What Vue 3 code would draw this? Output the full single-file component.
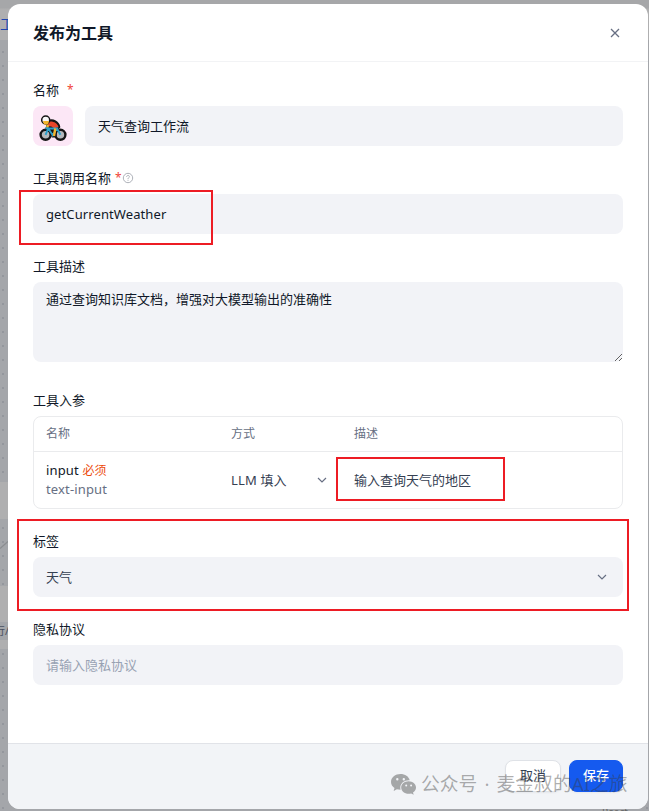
<script setup>
import { ref } from 'vue'

const name = ref('天气查询工作流')
const callName = ref('getCurrentWeather')
const description = ref('通过查询知识库文档，增强对大模型输出的准确性')
const privacy = ref('')

const params = ref([
  { name: 'input', type: 'text-input', required: true, method: 'LLM 填入', desc: '输入查询天气的地区' }
])
</script>

<template>
  <div class="page">
    <div class="canvas">
      <div class="topbar"><span>工</span></div>
      <div class="node node-a"></div>
      <svg class="edge" width="8" height="10" viewBox="0 0 8 10"><path d="M0 8.5 8 1.5" stroke="#8b8d91" stroke-width="1.3" /></svg>
      <div class="node node-b"><span>行/</span></div>
      <span class="attribution">React Flow</span>
    </div>

    <div class="modal">
      <header class="modal-header">
        <h1>发布为工具</h1>
        <svg class="close" width="16" height="16" viewBox="0 0 16 16" fill="none">
          <path d="M4 4l8 8M12 4l-8 8" stroke="#676f83" stroke-width="1.3" />
        </svg>
      </header>

      <main class="modal-body">
        <div class="field">
          <label>名称 <i class="star wide">*</i></label>
          <div class="name-row">
            <div class="app-icon">
              <svg width="28" height="28" viewBox="0 0 28 28" fill="none">
                <circle cx="6.6" cy="20.8" r="5" fill="#b4b8bb" stroke="#151515" stroke-width="2.4" />
                <circle cx="21.4" cy="20.8" r="5" fill="#b4b8bb" stroke="#151515" stroke-width="2.4" />
                <path d="M9.5 7C14 5 19.500 8 20.300 13L17 16.500l-.5 6h-3l-1-6-5-2z" fill="#151515" stroke="#151515" stroke-width="2" stroke-linejoin="round" />
                <path d="M9 8c4-1.600 9.500.8 10.500 5l-4.200 1.400-3-2-3.300-.2z" fill="#e8452a" />
                <path d="M9 11l-1 3" stroke="#f3b52c" stroke-width="2.400" />
                <path d="M6.600 20.800l2.600-6.300h8.600l-4 6.800-4.600-6.800M17.800 14l3.600 6.800M6.500 14.300h3" stroke="#2a9fca" stroke-width="1.900" />
                <path d="M16.300 14.500L15 22" stroke="#f3b52c" stroke-width="2.400" />
                <circle cx="6.700" cy="6" r="4" fill="#f8f8f8" stroke="#151515" stroke-width="1.500" />
                <path d="M4 7h6L9 10.500H5z" fill="#f3b52c" />
              </svg>
            </div>
            <input v-model="name" class="control" type="text">
          </div>
        </div>

        <div class="field">
          <label>工具调用名称 <i class="star">*</i>
            <svg class="help" width="12" height="12" viewBox="0 0 12 12" fill="none" stroke="#adb1b8">
              <circle cx="6" cy="6" r="4.700" />
              <path d="M4.600 4.800c.1-1.900 2.900-1.800 2.800 0C7.300 5.800 6 5.700 6 7M6 7.800v1" />
            </svg>
          </label>
          <input v-model="callName" class="control latin" type="text">
        </div>

        <div class="field field-area">
          <label>工具描述</label>
          <textarea v-model="description" class="control area"></textarea>
        </div>

        <div class="field">
          <label>工具入参</label>
          <div class="table">
            <div class="row head">
              <span>名称</span>
              <span>方式</span>
              <span>描述</span>
            </div>
            <div v-for="p in params" :key="p.name" class="row">
              <div class="param">
                <div><b>{{ p.name }}</b> <em v-if="p.required">必须</em></div>
                <div class="type">{{ p.type }}</div>
              </div>
              <div class="method">
                <span>{{ p.method }}</span>
                <svg width="12" height="12" viewBox="0 0 12 12" fill="none"><path d="M2 4l4 4 4-4" stroke="#676f83" stroke-width="1.200" /></svg>
              </div>
              <div class="desc">{{ p.desc }}</div>
            </div>
          </div>
        </div>

        <div class="field">
          <label>标签</label>
          <div class="control select">
            <span>天气</span>
            <svg width="12" height="12" viewBox="0 0 12 12" fill="none"><path d="M2 4l4 4 4-4" stroke="#676f83" stroke-width="1.200" /></svg>
          </div>
        </div>

        <div class="field">
          <label>隐私协议</label>
          <input v-model="privacy" class="control" type="text" placeholder="请输入隐私协议">
        </div>
      </main>

      <footer class="modal-footer">
        <button class="btn">取消</button>
        <button class="btn primary">保存</button>
      </footer>
    </div>

    <div class="mark mark-call"></div>
    <div class="mark mark-desc"></div>
    <div class="mark mark-tag"></div>

    <div class="watermark">
      <svg width="26" height="22" viewBox="0 0 26 22">
        <path fill-rule="evenodd" d="M9.500 1C4.300 1 0 4.500 0 8.900c0 2.500 1.400 4.600 3.500 6.100L2.600 18l3.300-1.800c1.100.3 2.300.5 3.700.5A7 7 0 0 1 9.300 14.500c0-4.200 3.900-7.300 8.500-7.300h.9C17.800 3.500 14 1 9.500 1zM6.300 5a1.200 1.200 0 1 1 0 2.400 1.200 1.200 0 0 1 0-2.400zm6.500 0a1.200 1.200 0 1 1 0 2.400 1.200 1.200 0 0 1 0-2.400z" />
        <path fill-rule="evenodd" d="M17.600 8.200c-4.200 0-7.400 2.800-7.400 6.300s3.200 6.300 7.400 6.300c.9 0 1.800-.2 2.600-.4l2.500 1.400-.7-2.300c1.900-1.300 3-3 3-5 0-3.500-3.400-6.300-7.400-6.300zM15.200 11.500a1 1 0 1 1 0 2 1 1 0 0 1 0-2zm4.900 0a1 1 0 1 1 0 2 1 1 0 0 1 0-2z" />
      </svg>
      <span>公众号 · 麦金叔的AI之旅</span>
    </div>
  </div>
</template>

<style>
body
{
    margin: 0;
    overflow: hidden;
}
</style>

<style scoped>
.page
{
    position: relative;
    box-sizing: border-box;
    width: 649px;
    height: 811px;
    padding: 4px 1px 2px 8px;
    overflow: hidden;
    background: #a4a6aa;
    font-family: "Noto Sans", "Noto Sans CJK SC", sans-serif;
    font-size: 13px;
    line-height: 20px;
    color: #101828;
}

/* dimmed workflow canvas behind the dialog */
.canvas
{
    position: absolute;
    inset: 0;
    background-image: radial-gradient(circle, #94979d 0.8px, transparent 1px);
    background-size: 14px 14px;
    background-position: -4px 3px;
}

.topbar
{
    position: absolute;
    top: 0;
    left: 0;
    width: 649px;
    height: 40px;
    background: linear-gradient(#a6a7a9 8px, #afafb0 9px);
}

.topbar span
{
    position: absolute;
    top: 14px;
    left: 0;
    font-size: 14px;
    color: #1f46b0;
}

.node
{
    position: absolute;
    left: 0;
    width: 10px;
    background: #afafb0;
}

.node-a
{
    top: 482px;
    height: 37px;
}

.node-b
{
    top: 586px;
    height: 63px;
}

.node-b span
{
    position: absolute;
    top: 36px;
    left: -6px;
    font-size: 11px;
    line-height: 18px;
    white-space: nowrap;
    color: #4b5261;
    background: #a4a6aa;
}

.edge
{
    position: absolute;
    top: 540px;
    left: 0;
}

.attribution
{
    position: absolute;
    top: 806px;
    left: 602px;
    font-size: 10px;
    line-height: 12px;
    color: #666;
}

.modal
{
    position: relative;
    display: flex;
    flex-direction: column;
    width: 640px;
    height: 805px;
    border-radius: 12px;
    overflow: hidden;
    background: #fff;
}

.modal-header
{
    box-sizing: border-box;
    display: flex;
    align-items: center;
    justify-content: space-between;
    height: 58px;
    padding: 0 25px;
    border-bottom: 1px solid #f2f3f5;
}

.modal-header h1
{
    margin: 0;
    font-size: 16px;
    line-height: 24px;
    font-weight: 700;
}

.modal-body
{
    display: flex;
    flex: 1;
    flex-direction: column;
    gap: 22px;
    padding: 18px 25px 0;
}

.field label
{
    display: flex;
    align-items: center;
    height: 19px;
    margin-bottom: 7px;
}

.field-area
{
    margin-bottom: 6px;
}

.star
{
    margin: 1px 0 0 4px;
    font-size: 12px;
    font-style: normal;
    color: #f04438;
}

.star.wide
{
    margin-left: 8px;
}

.help
{
    margin: 0;
}

.name-row
{
    display: flex;
    gap: 12px;
}

.app-icon
{
    display: flex;
    align-items: center;
    justify-content: center;
    width: 40px;
    height: 40px;
    border-radius: 8px;
    background: #fce7f6;
}

.app-icon svg
{
    margin-top: 3px;
}

.control
{
    box-sizing: border-box;
    display: block;
    width: 100%;
    height: 40px;
    padding: 0 13px 1px;
    border: 0;
    border-radius: 8px;
    outline: none;
    background: #f2f3f7;
    font: inherit;
    color: inherit;
}

.control.latin
{
    padding-bottom: 0;
    letter-spacing: 0.1px;
}

.name-row .control
{
    flex: 1;
    padding-bottom: 2px;
}

.control::placeholder
{
    color: #98a2b3;
    opacity: 1;
}

.control.area
{
    height: 80px;
    padding-top: 7px;
    resize: vertical;
}

.select
{
    display: flex;
    align-items: center;
    justify-content: space-between;
    padding-right: 15px;
    color: #354052;
}

.table
{
    box-sizing: border-box;
    height: 93px;
    border: 1px solid #eaebed;
    border-radius: 8px;
}

.row
{
    display: grid;
    grid-template-columns: 185px 123px 1fr;
    align-items: center;
    height: 56px;
    padding-left: 12px;
    color: #354052;
}

.row.head
{
    height: 34px;
    border-bottom: 1px solid #eaebed;
    font-size: 12px;
    color: #676f83;
}

.param
{
    margin-top: -1px;
    line-height: 18px;
    letter-spacing: 0.15px;
}

.param b
{
    font-weight: 400;
    color: #101828;
}

.param em
{
    font-size: 12px;
    font-style: normal;
    color: #ec4a0a;
}

.param .type
{
    color: #676f83;
}

.method
{
    display: flex;
    align-items: center;
    justify-content: space-between;
    padding-right: 26px;
    letter-spacing: 0.15px;
}

.desc
{
    margin-top: -1px;
}

.modal-footer
{
    box-sizing: border-box;
    display: flex;
    justify-content: flex-end;
    gap: 8px;
    height: 66px;
    padding: 16px 25px 0;
    border-top: 1px solid #e1e3e8;
    background: #f2f4f7;
}

.btn
{
    box-sizing: border-box;
    width: 56px;
    height: 32px;
    padding: 0 0 2px;
    border: 1px solid #dfe2e7;
    border-radius: 8px;
    background: #fff;
    box-shadow: 0 1px 2px rgba(16, 24, 40, 0.05);
    font: inherit;
    color: #354052;
}

.btn.primary
{
    width: 54px;
    border-color: #155aef;
    background: #155aef;
    font-weight: 500;
    color: #fff;
}

/* red highlight frames */
.mark
{
    position: absolute;
    box-sizing: border-box;
    border: 2px solid #ed1c24;
}

.mark-call
{
    top: 190px;
    left: 19px;
    width: 194px;
    height: 55px;
}

.mark-desc
{
    top: 457px;
    left: 336px;
    width: 169px;
    height: 44px;
}

.mark-tag
{
    top: 519px;
    left: 17px;
    width: 612px;
    height: 92px;
}

.watermark
{
    position: absolute;
    top: 772px;
    left: 391px;
    display: flex;
    align-items: center;
    gap: 4px;
    font-size: 18.8px;
    line-height: 24px;
    word-spacing: 2.2px;
    white-space: nowrap;
    color: rgba(60, 60, 60, 0.42);
}

.watermark svg
{
    fill: rgba(60, 60, 60, 0.42);
}
</style>
